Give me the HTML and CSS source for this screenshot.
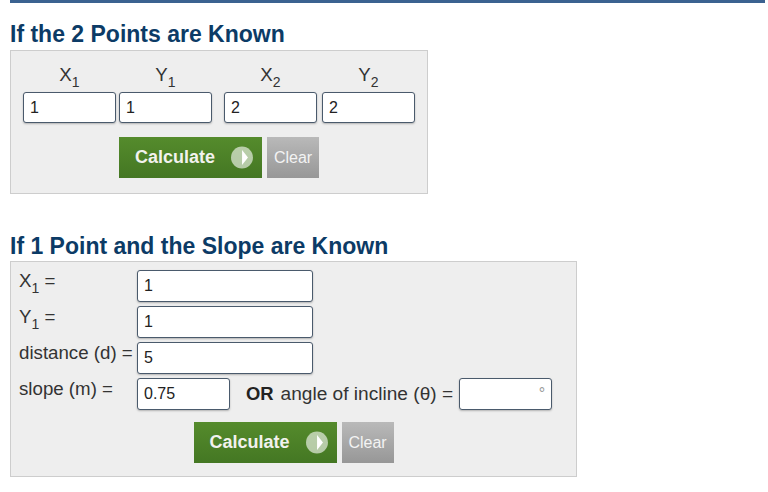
FILE: index.html
```html
<!DOCTYPE html>
<html lang="en">

<head>
    <meta charset="UTF-8">
    <title>Distance Calculator</title>
    <link rel="stylesheet" href="styles.css">
</head>

<body>

    <div class="pagina">

        <div class="faixa"></div>

        <h2 class="titulo">If the 2 Points are Known</h2>

        <div class="caixa caixa-pontos">
            <div class="grade">
                <div class="campo">
                    <label>X<sub>1</sub></label>
                    <input type="text" value="1">
                </div>
                <div class="campo">
                    <label>Y<sub>1</sub></label>
                    <input type="text" value="1">
                </div>
                <div class="campo segundo-par">
                    <label>X<sub>2</sub></label>
                    <input type="text" value="2">
                </div>
                <div class="campo ultimo">
                    <label>Y<sub>2</sub></label>
                    <input type="text" value="2">
                </div>
            </div>

            <div class="botoes">
                <button class="calcular">Calculate
                    <svg width="23" height="23" viewBox="0 0 23 23">
                        <circle cx="11.5" cy="11.5" r="11.5" fill="#fff" fill-opacity="0.6" />
                        <path d="M11.6 3.6 L17.8 11.5 L11.6 19.4 Z" fill="#fff" />
                    </svg>
                </button>
                <button class="limpar">Clear</button>
            </div>
        </div>

        <h2 class="titulo titulo-inclinacao">If 1 Point and the Slope are Known</h2>

        <div class="caixa caixa-inclinacao">
            <table class="tabela">
                <tr>
                    <td class="rotulo">X<sub>1</sub> =</td>
                    <td><input type="text" class="largo" value="1"></td>
                </tr>
                <tr>
                    <td class="rotulo">Y<sub>1</sub> =</td>
                    <td><input type="text" class="largo" value="1"></td>
                </tr>
                <tr>
                    <td class="rotulo">distance (d) =</td>
                    <td><input type="text" class="largo" value="5"></td>
                </tr>
                <tr>
                    <td class="rotulo">slope (m) =</td>
                    <td>
                        <div class="linha-inclinacao">
                            <input type="text" value="0.75">
                            <span class="ou">OR</span>
                            <span class="angulo">angle of incline (&theta;) =</span>
                            <input type="text" class="grau" placeholder="&deg;">
                        </div>
                    </td>
                </tr>
            </table>

            <div class="botoes botoes-inclinacao">
                <button class="calcular">Calculate
                    <svg width="23" height="23" viewBox="0 0 23 23">
                        <circle cx="11.5" cy="11.5" r="11.5" fill="#fff" fill-opacity="0.6" />
                        <path d="M11.6 3.6 L17.8 11.5 L11.6 19.4 Z" fill="#fff" />
                    </svg>
                </button>
                <button class="limpar">Clear</button>
            </div>
        </div>

    </div>

</body>

</html>
```

FILE: styles.css
```css
body {
    margin: 0;
    font-family: "Liberation Sans", Arial, sans-serif;
    color: #333;
    background-color: #fff;
}

.pagina {
    padding: 0 3px 0 10px;
}

.faixa {
    height: 3px;
    background-color: #3b6290;
}

.titulo {
    font-size: 23px;
    line-height: 26px;
    font-weight: bold;
    color: #0c3b66;
    margin: 18px 0 3px;
}

.titulo-inclinacao {
    margin-top: 39px;
    margin-bottom: 2px;
}

.caixa {
    box-sizing: border-box;
    background-color: #eeeeee;
    border: 1px solid #cdcdcd;
}

.caixa-pontos {
    width: 418px;
    padding: 13px 12px 15px 12px;
}

.grade {
    display: flex;
}

.campo {
    display: flex;
    flex-direction: column;
    width: 93px;
}

.campo + .campo {
    margin-left: 3px;
}

.campo.segundo-par {
    margin-left: 12px;
}

.campo.ultimo {
    margin-left: 5px;
}

.campo label {
    text-align: center;
    font-size: 18.7px;
    line-height: 22px;
    margin-bottom: 6px;
}

sub {
    font-size: 14px;
    line-height: 0;
    vertical-align: -6px;
}

input {
    box-sizing: border-box;
    width: 93px;
    height: 31px;
    padding: 0 5px 0 6px;
    font-family: "Liberation Sans", Arial, sans-serif;
    font-size: 16px;
    color: #222;
    background-color: #fff;
    border: 1px solid #4a5a6c;
    border-radius: 3px;
    box-shadow: 0 1px 2px rgba(0, 0, 0, 0.25);
    outline: none;
}

.botoes {
    display: flex;
    justify-content: center;
    gap: 5px;
    margin-top: 14px;
}

button {
    height: 41px;
    border: none;
    cursor: pointer;
    font-family: "Liberation Sans", Arial, sans-serif;
}

.calcular {
    display: flex;
    align-items: center;
    gap: 16px;
    width: 143px;
    padding: 0 9px 0 16px;
    font-size: 18px;
    font-weight: bold;
    color: #f2f2ee;
    background: linear-gradient(#558b2c, #447723);
}

.limpar {
    width: 52px;
    padding: 0;
    font-size: 16px;
    color: #f3f3f3;
    background: linear-gradient(#b9b9b9, #979797);
}

.caixa-inclinacao {
    width: 567px;
    padding: 6px 8px 13px 8px;
}

.tabela {
    border-spacing: 0;
}

.tabela td {
    padding: 2px 0;
}

.tabela .rotulo {
    width: 118px;
    vertical-align: top;
    font-size: 18.7px;
    line-height: 22px;
    white-space: nowrap;
}

.tabela input {
    height: 32px;
}

.tabela input.largo {
    width: 176px;
}

.linha-inclinacao {
    display: flex;
    align-items: center;
}

.ou {
    margin-left: 16px;
    font-size: 18.4px;
    font-weight: bold;
    color: #222;
}

.angulo {
    margin-left: 7px;
    margin-right: 6px;
    font-size: 19.1px;
}

.grau {
    text-align: right;
    padding-right: 6px;
}

.grau::placeholder {
    color: #999;
}

.botoes-inclinacao {
    margin-top: 10px;
}
```
